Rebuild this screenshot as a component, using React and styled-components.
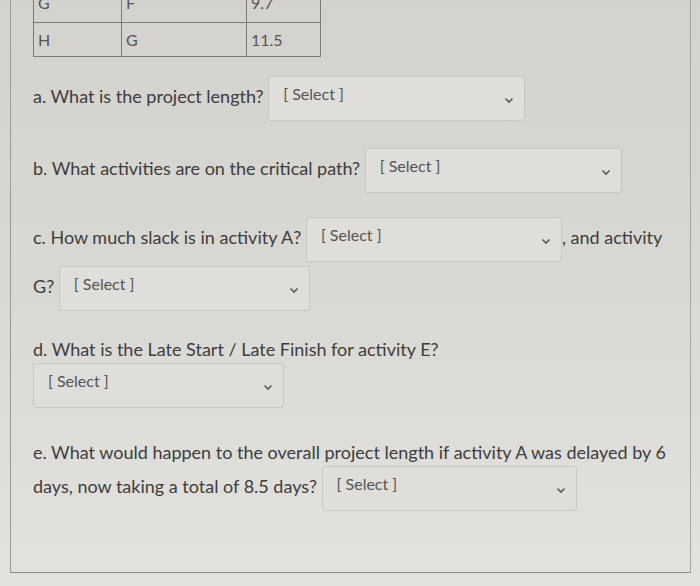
import React from "react";
import styled, { createGlobalStyle } from "styled-components";

const GlobalStyle = createGlobalStyle`
  html, body {
    margin: 0;
    padding: 0;
  }
  body {
    width: 700px;
    height: 586px;
    overflow: hidden;
    background: linear-gradient(180deg, #d4d2cd 0%, #d9d8d3 50%, #e3e2de 100%);
    font-family: Lato, "Open Sans", "Liberation Sans", sans-serif;
    color: #3f3f3f;
  }
`;

const Frame = styled.div`
  margin-left: 10px;
  width: 681px;
  height: 573px;
  border-left: 1px solid #9c9a96;
  border-right: 1px solid #a8a6a2;
  border-bottom: 1px solid #8e8c88;
  padding: 0 6px 0 22px;
  box-sizing: border-box;
  overflow: hidden;
`;

const Table = styled.table`
  border-collapse: collapse;
  margin-top: -12px;
  font-size: 16px;
  color: #555;
`;

const Cell = styled.td`
  width: ${({ w }) => w}px;
  height: 34px;
  padding: 0 0 ${({ top }) => (top ? 6 : 0)}px 4px;
  border: 1px solid #7d7b78;
  box-sizing: border-box;
  vertical-align: middle;
`;

const Question = styled.p`
  margin: ${({ space }) => space}px 0 0;
  font-size: 18px;
  line-height: 24px;
  color: #3d3d3d;
`;

const SelectBox = styled.span`
  display: inline-flex;
  align-items: center;
  justify-content: space-between;
  vertical-align: middle;
  box-sizing: border-box;
  width: ${({ w }) => w || 256}px;
  height: 45px;
  margin: 2px 0;
  padding: 0 10px 9px 14px;
  background: #dfdeda;
  border: 1px solid #c9c7c3;
  border-radius: 3px;
  font-size: 16px;
  line-height: 20px;
  color: #555;
`;

const Chevron = () => (
  <svg width="10" height="7" viewBox="0 0 10 7" style={{ marginTop: 12 }}>
    <path d="M1.5 1.5 L5 5 L8.5 1.5" fill="none" stroke="#5a5a5a" strokeWidth="1.6" />
  </svg>
);

const Select = ({ w }) => (
  <SelectBox w={w}>
    <span>[ Select ]</span>
    <Chevron />
  </SelectBox>
);

const rows = [
  ["G", "F", "9.7"],
  ["H", "G", "11.5"],
];

export default function App() {
  return (
    <>
      <GlobalStyle />
      <Frame>
        <Table>
          <tbody>
            {rows.map((r, i) => (
              <tr key={r[0]}>
                <Cell w={88} top={i === 0}>{r[0]}</Cell>
                <Cell w={125} top={i === 0}>{r[1]}</Cell>
                <Cell w={74} top={i === 0}>{r[2]}</Cell>
              </tr>
            ))}
          </tbody>
        </Table>
        <Question space={17}>
          a. What is the project length? <Select w={257} />
        </Question>
        <Question space={23}>
          b. What activities are on the critical path? <Select w={257} />
        </Question>
        <Question space={20}>
          c. How much slack is in activity A? <Select w={256} />, and activity G? <Select w={251} />
        </Question>
        <Question space={24}>
          d. What is the Late Start / Late Finish for activity E? <Select w={251} />
        </Question>
        <Question space={30}>
          e. What would happen to the overall project length if activity A was delayed by 6 days, now taking a total of 8.5 days? <Select w={255} />
        </Question>
      </Frame>
    </>
  );
}
